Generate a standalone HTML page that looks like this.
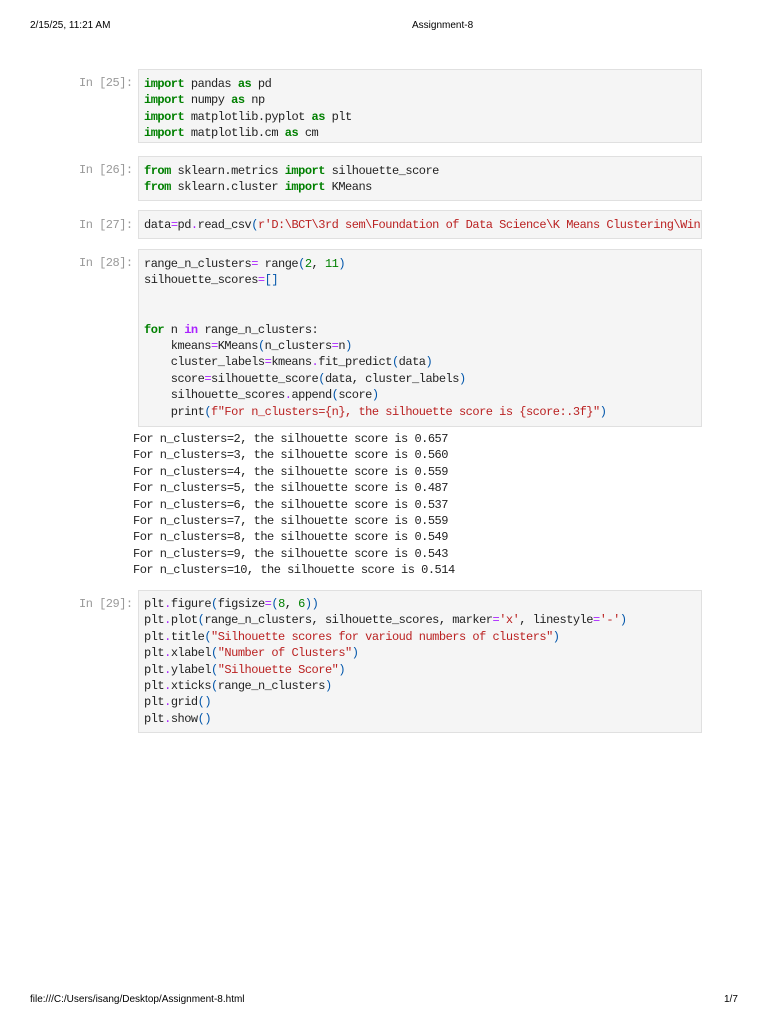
<!DOCTYPE html>
<html><head><meta charset="utf-8"><style>
body{margin:0;background:#fff;width:768px;height:1024px;position:relative;overflow:hidden;font-family:"Liberation Mono",monospace;}
.hd{position:absolute;font-family:"Liberation Sans",Arial,sans-serif;font-size:10px;color:#000;}
.p{position:absolute;left:79px;font-size:12px;letter-spacing:-0.5px;color:#999;line-height:16.4px;}
.box{position:absolute;left:138px;width:562px;background:#f5f5f5;border:1px solid #e0e0e0;overflow:hidden;}
pre{margin:0;font-family:"Liberation Mono",monospace;font-size:12px;letter-spacing:-0.5px;line-height:16.4px;color:#222;white-space:pre;}
.box pre{position:absolute;left:5px;}
.k{color:#008000;font-weight:bold}.o{color:#aa22ff}.s{color:#ba2121}.n{color:#008000}.b{color:#0055aa}.ow{color:#aa22ff;font-weight:bold}
.out{position:absolute;left:133px;color:#222;}
</style></head><body>
<div class="hd" style="left:30px;top:20px">2/15/25, 11:21 AM</div>
<div class="hd" style="left:412px;top:20px">Assignment-8</div>
<div class="hd" style="left:30px;top:994px">file:///C:/Users/isang/Desktop/Assignment-8.html</div>
<div class="hd" style="left:724px;top:994px">1/7</div>

<div class="p" style="top:75px">In [25]:</div>
<div class="box" style="top:69px;height:72px"><pre style="top:6px"><span class="k">import</span> pandas <span class="k">as</span> pd
<span class="k">import</span> numpy <span class="k">as</span> np
<span class="k">import</span> matplotlib.pyplot <span class="k">as</span> plt
<span class="k">import</span> matplotlib.cm <span class="k">as</span> cm</pre></div>

<div class="p" style="top:162px">In [26]:</div>
<div class="box" style="top:156px;height:43px"><pre style="top:6px"><span class="k">from</span> sklearn.metrics <span class="k">import</span> silhouette_score
<span class="k">from</span> sklearn.cluster <span class="k">import</span> KMeans</pre></div>

<div class="p" style="top:217px">In [27]:</div>
<div class="box" style="top:210px;height:27px"><pre style="top:6px">data<span class="o">=</span>pd<span class="o">.</span>read_csv<span class="b">(</span><span class="s">r'D:\BCT\3rd sem\Foundation of Data Science\K Means Clustering\Wine.csv'</span><span class="b">)</span></pre></div>

<div class="p" style="top:255px">In [28]:</div>
<div class="box" style="top:249px;height:176px"><pre style="top:6px">range_n_clusters<span class="o">=</span> range<span class="b">(</span><span class="n">2</span>, <span class="n">11</span><span class="b">)</span>
silhouette_scores<span class="o">=</span><span class="b">[]</span>


<span class="k">for</span> n <span class="ow">in</span> range_n_clusters:
    kmeans<span class="o">=</span>KMeans<span class="b">(</span>n_clusters<span class="o">=</span>n<span class="b">)</span>
    cluster_labels<span class="o">=</span>kmeans<span class="o">.</span>fit_predict<span class="b">(</span>data<span class="b">)</span>
    score<span class="o">=</span>silhouette_score<span class="b">(</span>data, cluster_labels<span class="b">)</span>
    silhouette_scores<span class="o">.</span>append<span class="b">(</span>score<span class="b">)</span>
    print<span class="b">(</span><span class="s">f"For n_clusters={n}, the silhouette score is {score:.3f}"</span><span class="b">)</span></pre></div>

<pre class="out" style="top:431px">For n_clusters=2, the silhouette score is 0.657
For n_clusters=3, the silhouette score is 0.560
For n_clusters=4, the silhouette score is 0.559
For n_clusters=5, the silhouette score is 0.487
For n_clusters=6, the silhouette score is 0.537
For n_clusters=7, the silhouette score is 0.559
For n_clusters=8, the silhouette score is 0.549
For n_clusters=9, the silhouette score is 0.543
For n_clusters=10, the silhouette score is 0.514</pre>

<div class="p" style="top:596px">In [29]:</div>
<div class="box" style="top:590px;height:141px"><pre style="top:5px">plt<span class="o">.</span>figure<span class="b">(</span>figsize<span class="o">=</span><span class="b">(</span><span class="n">8</span>, <span class="n">6</span><span class="b">))</span>
plt<span class="o">.</span>plot<span class="b">(</span>range_n_clusters, silhouette_scores, marker<span class="o">=</span><span class="s">'x'</span>, linestyle<span class="o">=</span><span class="s">'-'</span><span class="b">)</span>
plt<span class="o">.</span>title<span class="b">(</span><span class="s">"Silhouette scores for varioud numbers of clusters"</span><span class="b">)</span>
plt<span class="o">.</span>xlabel<span class="b">(</span><span class="s">"Number of Clusters"</span><span class="b">)</span>
plt<span class="o">.</span>ylabel<span class="b">(</span><span class="s">"Silhouette Score"</span><span class="b">)</span>
plt<span class="o">.</span>xticks<span class="b">(</span>range_n_clusters<span class="b">)</span>
plt<span class="o">.</span>grid<span class="b">()</span>
plt<span class="o">.</span>show<span class="b">()</span></pre></div>
</body></html>
